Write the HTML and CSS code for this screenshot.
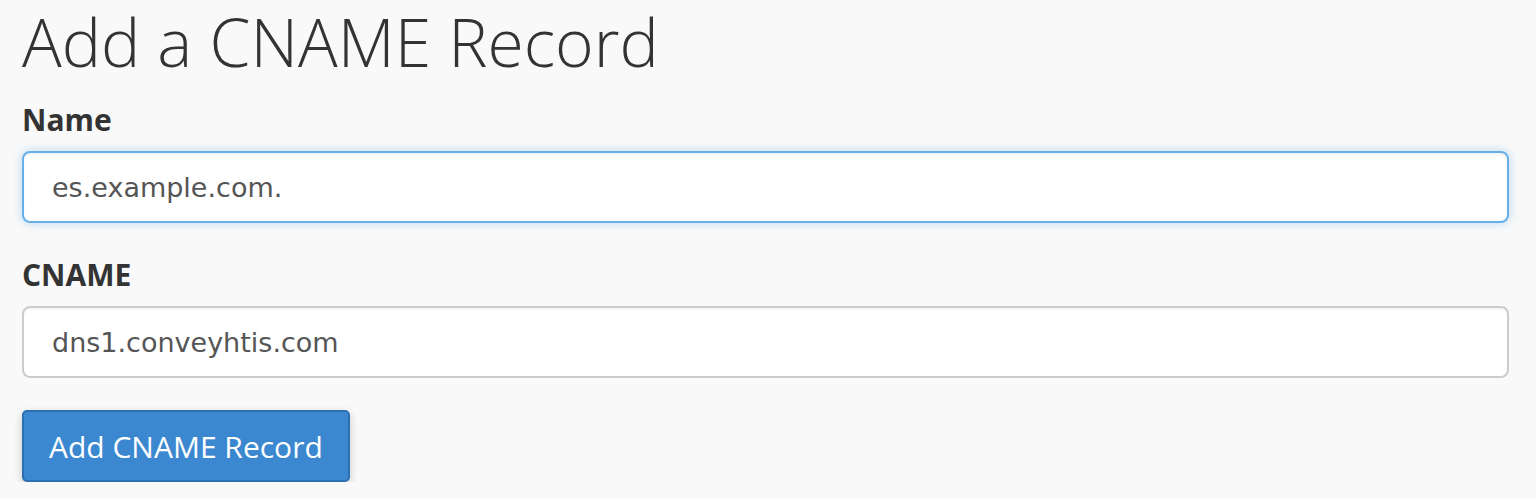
FILE: index.html
```html
<!DOCTYPE html>
<html lang="en">
<head>
    <meta charset="UTF-8">
    <meta name="viewport" content="width=device-width, initial-scale=1.0">
    <title>Add a CNAME Record</title>
    <link rel="stylesheet" href="styles.css">
</head>
<body>
    <div class="page">
        <h1 class="page-title">Add a CNAME Record</h1>

        <form class="record-form" onsubmit="return false;">
            <div class="form-group">
                <label class="form-label" for="name">Name</label>
                <input class="form-input focused" type="text" id="name" value="es.example.com.">
            </div>

            <div class="form-group">
                <label class="form-label" for="cname">CNAME</label>
                <input class="form-input" type="text" id="cname" value="dns1.conveyhtis.com">
            </div>

            <div class="form-actions">
                <button class="btn-primary" type="submit">Add CNAME Record</button>
            </div>
        </form>
    </div>
</body>
</html>
```

FILE: styles.css
```css
body {
    margin: 0;
    background: #f9f9f9;
    font-family: "Open Sans", Arial, sans-serif;
    color: #333;
}
.page {
    padding: 0 22px;
    width: 1487px;
}
.page-title {
    margin: -4px 0 0 0;
    font-size: 66px;
    font-weight: 300;
    line-height: 90px;
    color: #333;
}
.record-form {
    margin-top: 14px;
}
.form-group {
    display: flex;
    flex-direction: column;
    margin-bottom: 32px;
}
.form-label {
    font-size: 30px;
    font-weight: 700;
    line-height: 40px;
    margin-bottom: 11px;
    color: #333;
}
.form-input {
    box-sizing: border-box;
    height: 72px;
    width: 100%;
    padding: 0 28px;
    border: 2px solid #ccc;
    border-radius: 8px;
    background: #fff;
    font-family: "DejaVu Sans", Verdana, sans-serif;
    font-size: 27px;
    color: #555;
    box-shadow: inset 0 2px 2px rgba(0,0,0,0.04);
    outline: none;
}
.form-input.focused {
    border-color: #66afe9;
    box-shadow: inset 0 2px 2px rgba(0,0,0,0.05), 0 0 10px rgba(102,175,233,0.45);
}
.btn-primary {
    box-sizing: border-box;
    height: 72px;
    padding: 0 25px;
    background: #3b88d0;
    border: 2px solid #2c70b3;
    border-radius: 5px;
    color: #fff;
    font-family: "Open Sans", Arial, sans-serif;
    font-size: 30px;
    box-shadow: 0 3px 8px rgba(0,0,0,0.2);
    cursor: pointer;
}
```
